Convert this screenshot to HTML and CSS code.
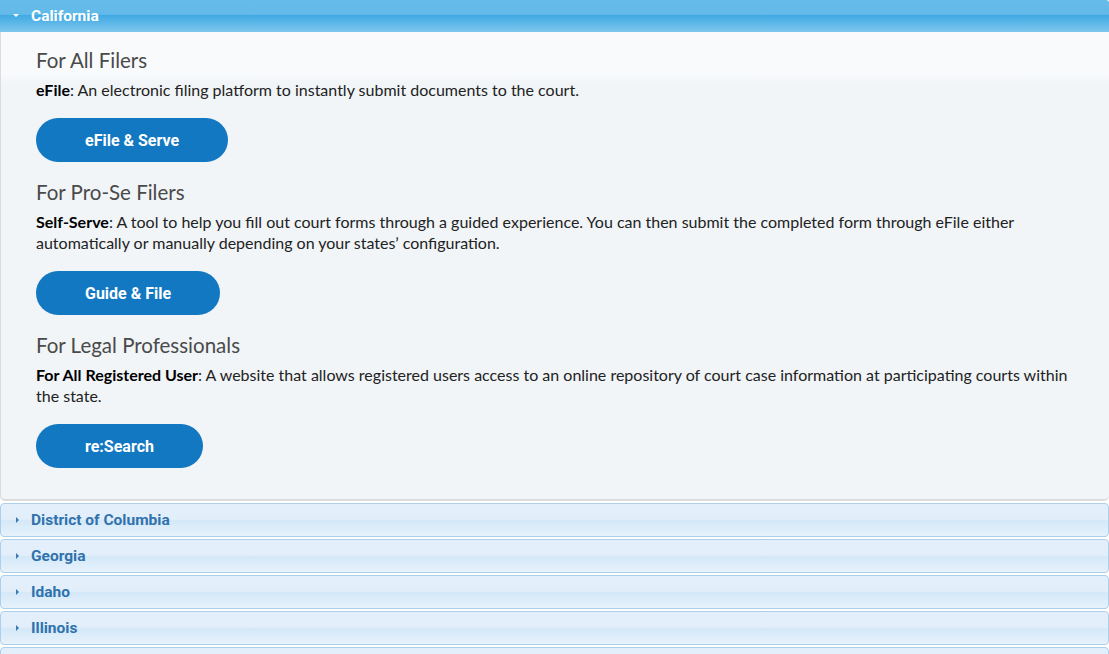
FILE: index.html
```html
<!DOCTYPE html>
<html lang="en">
<head>
    <meta charset="UTF-8">
    <meta name="viewport" content="width=device-width, initial-scale=1.0">
    <title>Filing Options</title>
    <link rel="stylesheet" href="styles.css">
</head>
<body>
    <div class="accordion">
        <!-- open state -->
        <div class="acc_header active">
            <span class="arrow_down"></span>
            California
        </div>
        <div class="acc_panel">
            <h3>For All Filers</h3>
            <p><b>eFile</b>: An electronic filing platform to instantly submit documents to the court.</p>
            <a class="pill_btn" href="#">eFile &amp; Serve</a>

            <h3>For Pro-Se Filers</h3>
            <p><b>Self-Serve</b>: A tool to help you fill out court forms through a guided experience. You can then submit the completed form through eFile either automatically or manually depending on your states’ configuration.</p>
            <a class="pill_btn" href="#">Guide &amp; File</a>

            <h3>For Legal Professionals</h3>
            <p><b>For All Registered User</b>: A website that allows registered users access to an online repository of court case information at participating courts within the state.</p>
            <a class="pill_btn" href="#">re:Search</a>
        </div>

        <div class="acc_header"><span class="arrow_right"></span>District of Columbia</div>
        <div class="acc_header"><span class="arrow_right"></span>Georgia</div>
        <div class="acc_header"><span class="arrow_right"></span>Idaho</div>
        <div class="acc_header"><span class="arrow_right"></span>Illinois</div>
        <div class="acc_header"><span class="arrow_right"></span>Indiana</div>
    </div>
</body>
</html>
```

FILE: styles.css
```css
body{
    margin: 0;
    background-color: #ffffff;
    font-family: Lato, "Open Sans", sans-serif;
    overflow: hidden;
}
.accordion{
    display: flex;
    flex-direction: column;
    gap: 2px;
}
.acc_header{
    display: flex;
    align-items: center;
    height: 32px;
    padding-left: 30px;
    position: relative;
    font-family: Roboto, sans-serif;
    font-weight: 700;
    font-size: 15.5px;
    color: #2f72ad;
    border: 1px solid #aecfea;
    border-radius: 4px;
    background: linear-gradient(to bottom, #e3f0fb 0%, #e2effa 48%, #d4e8f8 50%, #e6f2fc 100%);
}
.acc_header.active{
    height: 32px;
    border: 0;
    padding-left: 31px;
    border-radius: 0 3px 0 0;
    color: #ffffff;
    background: linear-gradient(to bottom, #65bce9 0%, #63bae8 45%, #40a9e3 48%, #7ec7ee 100%);
}
.arrow_down{
    position: absolute;
    left: 13px;
    top: 14px;
    border-left: 3px solid transparent;
    border-right: 3px solid transparent;
    border-top: 3px solid #ffffff;
}
.arrow_right{
    position: absolute;
    left: 15px;
    top: 13px;
    border-top: 3.5px solid transparent;
    border-bottom: 3.5px solid transparent;
    border-left: 3.5px solid #3a78b0;
}
.acc_panel{
    margin-top: -2px;
    padding: 15px 35px 31px 35px;
    border-left: 1px solid #dcdcdc;
    border-bottom: 2px solid #dcdcdc;
    border-radius: 0 0 5px 5px;
    background: linear-gradient(to bottom, #f8fafc 0px, #f8fafc 42px, #f1f5f8 52px, #f1f5f8 100%);
    display: flex;
    flex-direction: column;
    align-items: flex-start;
}
.acc_panel h3{
    margin: 0;
    font-weight: 400;
    font-size: 20.5px;
    line-height: 26px;
    color: #4a4a4a;
}
.acc_panel p{
    margin: 6px 0 18px 0;
    font-size: 16px;
    line-height: 21px;
    color: #222222;
}
.acc_panel p b{
    color: #000000;
}
.pill_btn{
    display: flex;
    align-items: center;
    height: 44px;
    padding: 0 49px;
    margin-bottom: 17px;
    border-radius: 22px;
    background-color: #1278c2;
    color: #ffffff;
    font-family: Roboto, sans-serif;
    font-weight: 700;
    font-size: 16px;
    text-decoration: none;
}
.pill_btn:last-child{
    margin-bottom: 0;
}
```
